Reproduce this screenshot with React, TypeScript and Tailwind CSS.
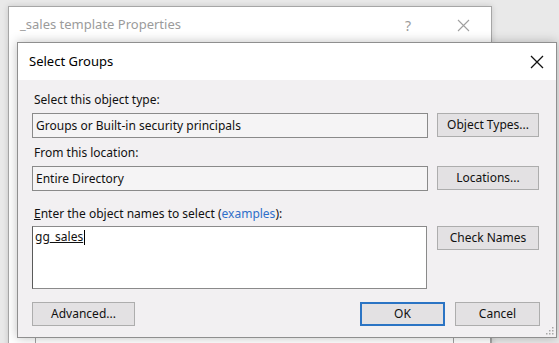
import React from "react";

const font = { fontFamily: '"Noto Sans", "Open Sans", Arial, sans-serif' };

const Btn = ({ label, w, primary }: { label: React.ReactNode; w: string; primary?: boolean }) => (
  <button
    className={`${w} h-[24px] shrink-0 bg-[#e3e1e3] text-[12px] text-[#111] flex items-center justify-center ${
      primary ? "border-2 border-[#2b74c4]" : "border border-[#adadad]"
    }`}
  >
    {label}
  </button>
);

export default function App() {
  return (
    <div className="relative w-[559px] h-[343px] overflow-hidden bg-[#e9e9e9]" style={font}>
      {/* parent window */}
      <div className="absolute left-[8px] top-[6px] w-[484px] h-[400px] bg-white border border-[#a6a6a6] shadow-[0_0_6px_rgba(0,0,0,0.15)]">
        <div className="h-[36px] flex items-center pl-[11px] pr-[21px] text-[13px] text-[#9b9b9b]">
          <span className="flex-1">_sales template Properties</span>
          <span className="mr-[46px] text-[14px]">?</span>
          <svg width="13" height="13" viewBox="0 0 13 13" className="stroke-[#a0a0a0]">
            <path d="M1 1L12 12M12 1L1 12" strokeWidth="1.1" />
          </svg>
        </div>
        <div className="absolute left-[26px] top-[320px] w-[419px] h-[60px] border-l border-[#a0a0a0]" />
        <div className="absolute left-[444px] top-[320px] w-[38px] h-[60px] border-x border-[#a0a0a0]" />
      </div>

      {/* Select Groups dialog */}
      <div className="absolute left-[17px] top-[42px] w-[540px] h-[296px] border border-[#8f8f8f] bg-[#f2f0f2] shadow-[0_0_10px_rgba(0,0,0,0.25)] flex flex-col">
        <div className="h-[37px] bg-white flex items-center pl-[11px] pr-[12px] shrink-0">
          <span className="flex-1 text-[13px] text-black">Select Groups</span>
          <svg width="14" height="14" viewBox="0 0 14 14" className="stroke-[#111]">
            <path d="M1 1L13 13M13 1L1 13" strokeWidth="1.3" />
          </svg>
        </div>

        <div className="flex-1 pl-[14px] pr-[16px] pt-[12px] text-[12px] text-[#111] relative">
          <div className="h-[16px] leading-[16px] pl-[2px]">Select this object type:</div>
          <div className="mt-[5px] flex gap-[9px]">
            <div className="w-[396px] h-[25px] border border-[#8a8a8a] bg-[#f5f4f5] flex items-center pl-[3px]">
              Groups or Built-in security principals
            </div>
            <Btn label="Object Types..." w="w-[102px]" />
          </div>

          <div className="mt-[7px] h-[16px] leading-[16px] pl-[2px]">From this location:</div>
          <div className="mt-[5px] flex gap-[9px]">
            <div className="w-[396px] h-[25px] border border-[#8a8a8a] bg-[#f5f4f5] flex items-center pl-[3px]">
              Entire Directory
            </div>
            <Btn label="Locations..." w="w-[102px]" />
          </div>

          <div className="mt-[15px] h-[16px] leading-[16px] pl-[2px]">
            <span className="underline">E</span>nter the object names to select (
            <span className="text-[#2f6fc9]">examples</span>):
          </div>
          <div className="mt-[4px] flex gap-[10px]">
            <div className="w-[395px] h-[63px] border border-[#8a8a8a] border-l-[#5a5a5a] bg-white pl-[2px] pt-[1px]">
              <span className="inline-flex items-center h-[16px] leading-[16px] underline text-[#111]">
                gg_sales
                <span className="inline-block w-[1px] h-[15px] bg-black ml-[1px]" />
              </span>
            </div>
            <Btn label="Check Names" w="w-[102px]" />
          </div>

          <div className="mt-[13px] flex items-center">
            <Btn label="Advanced..." w="w-[103px]" />
            <div className="flex-1" />
            <div className="flex gap-[10px]">
              <Btn label="OK" w="w-[85px]" primary />
              <Btn label="Cancel" w="w-[85px]" />
            </div>
          </div>

          {/* resize grip */}
          <svg width="9" height="9" viewBox="0 0 9 9" className="absolute right-[2px] bottom-[2px] fill-[#a8a8a8]">
            <rect x="7" y="1" width="1.5" height="1.5" />
            <rect x="4" y="4" width="1.5" height="1.5" />
            <rect x="7" y="4" width="1.5" height="1.5" />
            <rect x="1" y="7" width="1.5" height="1.5" />
            <rect x="4" y="7" width="1.5" height="1.5" />
            <rect x="7" y="7" width="1.5" height="1.5" />
          </svg>
        </div>
      </div>
    </div>
  );
}
